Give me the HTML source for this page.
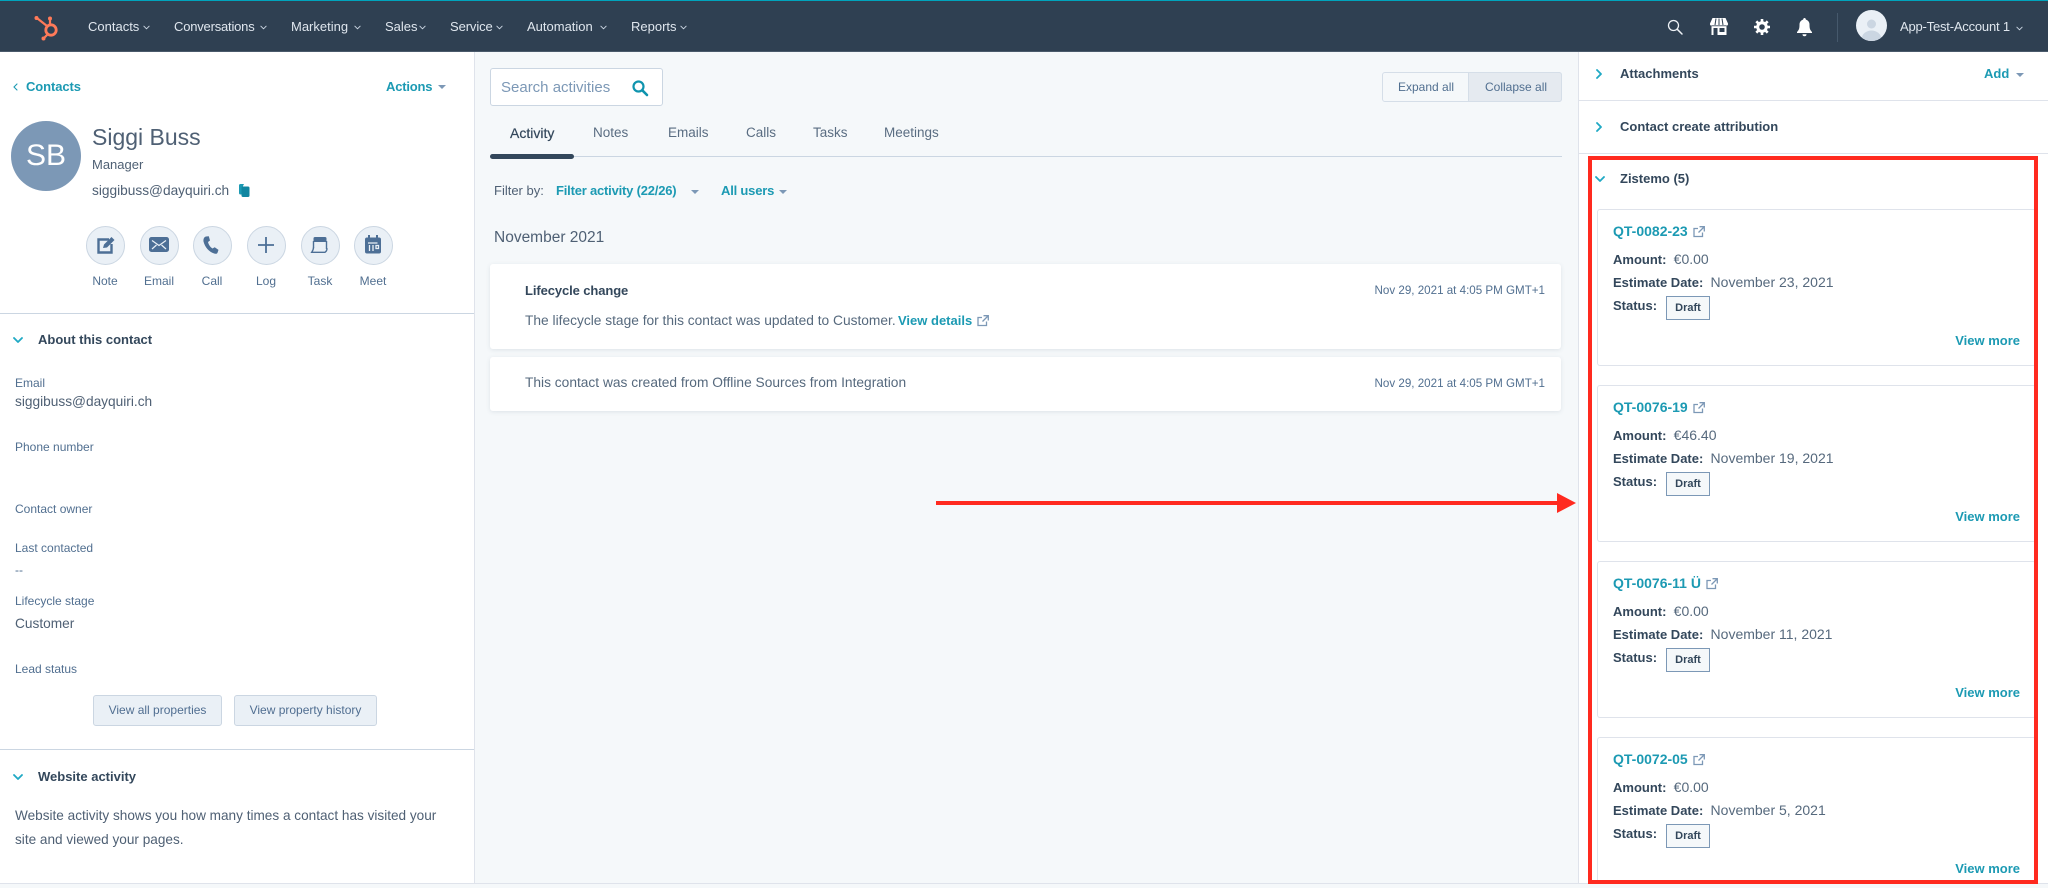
<!DOCTYPE html>
<html lang="en">
<head>
<meta charset="utf-8">
<title>Siggi Buss - Contact</title>
<style>
*{box-sizing:border-box}
html,body{margin:0;padding:0;width:2048px;height:888px;overflow:hidden;background:#f5f8fa}
body{font-family:"Liberation Sans",sans-serif;color:#33475b;font-size:13px}
#p{position:absolute;left:0;top:0;width:2048px;height:888px;overflow:hidden;filter:blur(.35px);background:#f5f8fa}
.a{position:absolute;white-space:nowrap;line-height:20px}
.b{font-weight:bold}
.l{color:#1c9ab3}
.g{color:#516f90}
.box{position:absolute}
svg{position:absolute;overflow:visible}
.nav{color:#dfe6ee;font-size:13px}
.lab{font-size:12px;color:#516f90;left:15px}
.val{font-size:13.7px;left:15px;color:#4f6074}
.circ{position:absolute;top:226px;width:39px;height:39px;border-radius:50%;background:#eaf0f6;border:1px solid #cbd6e2}
.al{top:271px;font-size:12px;color:#516f90;width:60px;text-align:center}
.tab{top:123px;font-size:13.5px;color:#5a6d82}
.btn{position:absolute;top:695px;height:31px;background:#eaf0f6;border:1px solid #cbd6e2;border-radius:3px;color:#506e91;font-size:12px;line-height:29px;text-align:center}
.card{position:absolute;left:490px;width:1071px;background:#fff;border-radius:3px;box-shadow:0 1px 4px rgba(66,91,118,.13)}
.ts{font-size:11.6px;color:#516f90;right:503px}
.q{position:absolute;left:1597px;width:439px;height:157px;background:#fff;border:1px solid #dfe3eb;border-radius:3px}
.q .a{left:15px}
.q .t{top:11px;font-size:14px;font-weight:bold;color:#1c9ab3}
.q .r{font-size:13px;font-weight:bold;color:#33475b}
.q .v{font-size:14px;color:#56697d;font-weight:normal}
.q .d{position:absolute;left:68px;top:86px;width:44px;height:24px;background:#f5f8fa;border:1px solid #7c98b6;font-size:11px;font-weight:bold;line-height:22px;text-align:center;color:#33475b}
.q .m{left:auto;right:15px;top:121px;font-size:13px;font-weight:bold;color:#1c9ab3}
</style>
</head>
<body>
<svg width="0" height="0" style="position:absolute">
<defs>
<symbol id="chev" viewBox="0 0 8 5"><path d="M1 1l3 3 3-3" fill="none" stroke="currentColor" stroke-width="1.1" stroke-linecap="round" stroke-linejoin="round"/></symbol>
<symbol id="cd" viewBox="0 0 10 6"><path d="M1 1l4 4 4-4" fill="none" stroke="#1fa9c4" stroke-width="1.8" stroke-linecap="round" stroke-linejoin="round"/></symbol>
<symbol id="cr" viewBox="0 0 6 10"><path d="M1 1l4 4-4 4" fill="none" stroke="#1fa9c4" stroke-width="1.8" stroke-linecap="round" stroke-linejoin="round"/></symbol>
<symbol id="caret" viewBox="0 0 8 4"><path d="M0 0h8L4 4z" fill="#7c98b6"/></symbol>
<symbol id="ext" viewBox="0 0 12 12"><path d="M9.5 6.500v4h-8.500v-8h4M6.500.7h4.800v4.800M11 1L5.500 6.500" fill="none" stroke="#7c98b6" stroke-width="1.300"/></symbol>
</defs>
</svg>

<div id="p">
<!-- Top bar -->
<div class="box" style="left:0;top:0;width:2048px;height:52px;background:#2f4052;border-top:1px solid #00a4bd;border-bottom:1px solid #4a5a6b"></div>
<svg style="left:33px;top:14px" width="28" height="28" viewBox="0 0 28 28">
<circle cx="18" cy="16" r="5.200" fill="none" stroke="#ff7a59" stroke-width="2.800"/>
<path d="M17 10V5M14 12L4.500 4.500M14.500 20.500L11 24" stroke="#ff7a59" stroke-width="2.200" fill="none" stroke-linecap="round"/>
<circle cx="17" cy="4.500" r="2" fill="#ff7a59"/><circle cx="3.500" cy="4" r="2" fill="#ff7a59"/><circle cx="10.500" cy="24.500" r="2" fill="#ff7a59"/>
</svg>
<div class="a nav" style="left:88px;top:17px">Contacts</div><svg style="left:143px;top:25px;color:#cbd6e2" width="7" height="5"><use href="#chev"/></svg>
<div class="a nav" style="left:174px;top:17px;letter-spacing:-.2px">Conversations</div><svg style="left:260px;top:25px;color:#cbd6e2" width="7" height="5"><use href="#chev"/></svg>
<div class="a nav" style="left:291px;top:17px">Marketing</div><svg style="left:354px;top:25px;color:#cbd6e2" width="7" height="5"><use href="#chev"/></svg>
<div class="a nav" style="left:385px;top:17px">Sales</div><svg style="left:419px;top:25px;color:#cbd6e2" width="7" height="5"><use href="#chev"/></svg>
<div class="a nav" style="left:450px;top:17px;letter-spacing:-.1px">Service</div><svg style="left:496px;top:25px;color:#cbd6e2" width="7" height="5"><use href="#chev"/></svg>
<div class="a nav" style="left:527px;top:17px">Automation</div><svg style="left:600px;top:25px;color:#cbd6e2" width="7" height="5"><use href="#chev"/></svg>
<div class="a nav" style="left:631px;top:17px">Reports</div><svg style="left:680px;top:25px;color:#cbd6e2" width="7" height="5"><use href="#chev"/></svg>

<svg style="left:1667px;top:19px" width="16" height="16" viewBox="0 0 16 16"><circle cx="6.500" cy="6.500" r="5" fill="none" stroke="#eef2f6" stroke-width="1.300"/><path d="M10.300 10.300L15 15" stroke="#eef2f6" stroke-width="1.500" stroke-linecap="round"/></svg>
<svg style="left:1710px;top:18px" width="18" height="17" viewBox="0 0 18 17"><path d="M2.500 0h13L18 5.500a2 2 0 0 1-1.500 2.300V17H1.500V7.800A2 2 0 0 1 0 5.500z" fill="#fff"/><path d="M6 .5L5 7M9 .5V7M12 .5L13 7" stroke="#2f4052" stroke-width="1"/><path d="M1.500 7.800H16.500" stroke="#2f4052" stroke-width=".8"/><rect x="3.500" y="10" width="4" height="7" fill="#2f4052"/><rect x="9.500" y="10" width="5" height="4" fill="#2f4052"/></svg>
<svg style="left:1754px;top:19px" width="16" height="16" viewBox="0 0 16 16"><circle cx="8" cy="8" r="4.300" fill="none" stroke="#fff" stroke-width="3"/><path d="M8 0v3M8 13v3M0 8h3M13 8h3M2.300 2.300l2.100 2.100M11.600 11.600l2.100 2.100M13.700 2.300l-2.100 2.100M4.400 11.600l-2.100 2.100" stroke="#fff" stroke-width="2.600"/></svg>
<svg style="left:1797px;top:18px" width="15" height="18" viewBox="0 0 15 18"><path d="M7.500 0a1.300 1.300 0 0 1 1.300 1.500A5 5 0 0 1 12.500 6.500c0 4 .5 5.500 2.500 7.500v1H0v-1c2-2 2.500-3.500 2.500-7.500a5 5 0 0 1 3.700-5A1.300 1.300 0 0 1 7.500 0z" fill="#fff"/><path d="M5.500 16.200h4a2 2 0 0 1-4 0z" fill="#fff"/></svg>
<div class="box" style="left:1837px;top:13px;width:1px;height:29px;background:#46596c"></div>
<svg style="left:1856px;top:10px" width="31" height="31" viewBox="0 0 31 31"><defs><clipPath id="av"><circle cx="15.500" cy="15.500" r="15.500"/></clipPath></defs><circle cx="15.500" cy="15.500" r="15.500" fill="#eaf0f6"/><g clip-path="url(#av)"><circle cx="15.500" cy="14" r="4.500" fill="#cbd6e2"/><ellipse cx="15.500" cy="28" rx="9.500" ry="7.500" fill="#cbd6e2"/></g></svg>
<div class="a nav" style="left:1900px;top:17px;letter-spacing:-.2px">App-Test-Account 1</div><svg style="left:2016px;top:26px;color:#cbd6e2" width="7" height="5"><use href="#chev"/></svg>

<!-- Left panel -->
<div class="box" style="left:0;top:52px;width:475px;height:832px;background:#fff;border-right:1px solid #dfe3eb"></div>
<svg style="left:13px;top:83px" width="5" height="8" viewBox="0 0 5 8"><path d="M4 1L1 4l3 3" fill="none" stroke="#1c9ab3" stroke-width="1.100" stroke-linecap="round"/></svg>
<div class="a b l" style="left:26px;top:77px;letter-spacing:-.1px">Contacts</div>
<div class="a b l" style="left:386px;top:77px;letter-spacing:-.2px">Actions</div>
<svg style="left:438px;top:85px" width="8" height="4"><use href="#caret"/></svg>
<div class="box" style="left:11px;top:121px;width:70px;height:70px;border-radius:50%;background:#7c98b6;color:#fff;font-size:30px;line-height:70px;text-align:center">SB</div>
<div class="a" style="left:92px;top:126px;font-size:23px;color:#4f6074;line-height:22px">Siggi Buss</div>
<div class="a" style="left:92px;top:155px;font-size:13px;color:#4f6074">Manager</div>
<div class="a" style="left:92px;top:181px;font-size:13.700px;color:#4f6074">siggibuss@dayquiri.ch</div>
<svg style="left:239px;top:184px" width="11" height="13" viewBox="0 0 11 13"><path d="M0 1.500A1.500 1.500 0 0 1 1.500 0H5L4 2v8.500H1.500A1.500 1.500 0 0 1 0 9z" fill="#1c9ab3"/><rect x="2.500" y="2.500" width="8" height="10.500" rx="1.500" fill="#1186a1"/></svg>

<div class="circ" style="left:86px"></div>
<svg style="left:96px;top:235px" width="20" height="20" viewBox="0 0 20 20"><path d="M13 4.500H2.500v13H15.500V9" fill="none" stroke="#4d6f96" stroke-width="2.400"/><path d="M7 13l1-3.500L15.500 2l3 3L11 12.500z" fill="#4d6f96"/></svg>
<div class="circ" style="left:140px"></div>
<svg style="left:149px;top:237px" width="20" height="15" viewBox="0 0 20 15"><rect width="20" height="15" rx="2.500" fill="#4d6f96"/><path d="M3 3.500l7 5 7-5M3 12l4.500-4M17 12l-4.500-4" fill="none" stroke="#eaf0f6" stroke-width="1.200"/></svg>
<div class="circ" style="left:193px"></div>
<svg style="left:203px;top:236px" width="17" height="18" viewBox="0 0 17 18"><path d="M3 .5L5.800 .2l1.200 4.300-2 1.500c.5 2.500 2.200 5 4.500 6.500l2.200-1.200 3.800 2.600-1 2.800c-.4 1-1.500 1.300-2.500 1C6 16.300 1.800 11 .5 5.500.200 3 1 1 3 .5z" fill="#4d6f96"/></svg>
<div class="circ" style="left:247px"></div>
<svg style="left:258px;top:237px" width="16" height="16" viewBox="0 0 16 16"><path d="M8 0v16M0 8h16" stroke="#4d6f96" stroke-width="1.800"/></svg>
<div class="circ" style="left:301px"></div>
<svg style="left:311px;top:237px" width="18" height="16" viewBox="0 0 18 16"><path d="M2.500 1.500a1.500 1.500 0 0 1 1.500-1.500h10a1.500 1.500 0 0 1 1.500 1.500V5h-13z" fill="#4d6f96"/><path d="M2.500 4v7M15.500 4v8" stroke="#4d6f96" stroke-width="1.400" fill="none"/><path d="M2.500 10.500c0 2-.7 3-1.800 4.800H14c1.300-.8 2-2 2-4" fill="none" stroke="#4d6f96" stroke-width="1.400"/></svg>
<div class="circ" style="left:354px"></div>
<svg style="left:365px;top:235px" width="16" height="19" viewBox="0 0 16 19"><rect y="2.500" width="16" height="16" rx="2" fill="#4d6f96"/><path d="M4 0v3M12 0v3" stroke="#4d6f96" stroke-width="2"/><path d="M3 8h9.500M4.500 10v6M8 10v6M11 10.500h2.500v3H11z" stroke="#eaf0f6" stroke-width="1.300" fill="none"/></svg>
<div class="a al" style="left:75px">Note</div>
<div class="a al" style="left:129px">Email</div>
<div class="a al" style="left:182px">Call</div>
<div class="a al" style="left:236px">Log</div>
<div class="a al" style="left:290px">Task</div>
<div class="a al" style="left:343px">Meet</div>
<div class="box" style="left:0;top:313px;width:474px;height:1px;background:#cbd6e2"></div>

<svg style="left:13px;top:337px" width="10" height="6"><use href="#cd"/></svg>
<div class="a b" style="left:38px;top:330px">About this contact</div>
<div class="a lab" style="top:373px">Email</div>
<div class="a val" style="top:392px">siggibuss@dayquiri.ch</div>
<div class="a lab" style="top:437px">Phone number</div>
<div class="a lab" style="top:499px">Contact owner</div>
<div class="a lab" style="top:538px">Last contacted</div>
<div class="a lab" style="top:560px">--</div>
<div class="a lab" style="top:591px">Lifecycle stage</div>
<div class="a val" style="top:614px">Customer</div>
<div class="a lab" style="top:659px">Lead status</div>
<div class="btn" style="left:93px;width:129px">View all properties</div>
<div class="btn" style="left:234px;width:143px">View property history</div>
<div class="box" style="left:0;top:749px;width:474px;height:1px;background:#cbd6e2"></div>
<svg style="left:13px;top:774px" width="10" height="6"><use href="#cd"/></svg>
<div class="a b" style="left:38px;top:767px">Website activity</div>
<div class="a" style="left:15px;top:806px;font-size:13.600px;color:#4f6074">Website activity shows you how many times a contact has visited your</div>
<div class="a" style="left:15px;top:830px;font-size:13.600px;color:#4f6074">site and viewed your pages.</div>

<!-- Centre -->
<div class="box" style="left:490px;top:68px;width:173px;height:38px;background:#fff;border:1px solid #cbd6e2;border-radius:3px"></div>
<div class="a" style="left:501px;top:78px;font-size:15px;color:#7c98b6">Search activities</div>
<svg style="left:632px;top:80px" width="16" height="16" viewBox="0 0 16 16"><circle cx="6.500" cy="6.500" r="5" fill="none" stroke="#0f94ae" stroke-width="2.200"/><path d="M10.300 10.300L15 15" stroke="#0f94ae" stroke-width="2.600" stroke-linecap="round"/></svg>
<div class="a tab" style="left:510px;color:#33475b;font-size:14px;-webkit-text-stroke:.2px #33475b">Activity</div>
<div class="a tab" style="left:593px">Notes</div>
<div class="a tab" style="left:668px">Emails</div>
<div class="a tab" style="left:746px">Calls</div>
<div class="a tab" style="left:813px">Tasks</div>
<div class="a tab" style="left:884px">Meetings</div>
<div class="box" style="left:490px;top:156px;width:1072px;height:1px;background:#cbd6e2"></div>
<div class="box" style="left:490px;top:154px;width:84px;height:5px;background:#33475b;border-radius:3px"></div>
<div class="a g" style="left:494px;top:181px;color:#4f6074">Filter by:</div>
<div class="a b l" style="left:556px;top:181px;letter-spacing:-.2px">Filter activity (22/26)</div>
<svg style="left:691px;top:190px" width="8" height="4"><use href="#caret"/></svg>
<div class="a b l" style="left:721px;top:181px;letter-spacing:-.2px">All users</div>
<svg style="left:779px;top:190px" width="8" height="4"><use href="#caret"/></svg>
<div class="a" style="left:494px;top:228px;font-size:15.500px;color:#4f6074">November 2021</div>

<div class="box" style="left:1382px;top:72px;width:180px;height:30px;border:1px solid #d5dee8;border-radius:3px;background:#f5f8fa"></div>
<div class="box" style="left:1468px;top:72px;width:94px;height:30px;border:1px solid #d5dee8;border-radius:0 3px 3px 0;background:#e5eaf0"></div>
<div class="a g" style="left:1398px;top:77px;font-size:12px">Expand all</div>
<div class="a g" style="left:1485px;top:77px;font-size:12px">Collapse all</div>

<div class="card" style="top:264px;height:85px"></div>
<div class="a b" style="left:525px;top:281px;letter-spacing:-.1px">Lifecycle change</div>
<div class="a" style="left:525px;top:311px;font-size:13.750px;color:#56697d">The lifecycle stage for this contact was updated to Customer.</div>
<div class="a b l" style="left:898px;top:311px">View details</div>
<svg style="left:977px;top:315px" width="12" height="12"><use href="#ext"/></svg>
<div class="a ts" style="top:281px">Nov 29, 2021 at 4:05 PM GMT+1</div>
<div class="card" style="top:357px;height:54px"></div>
<div class="a" style="left:525px;top:373px;font-size:13.750px;color:#56697d">This contact was created from Offline Sources from Integration</div>
<div class="a ts" style="top:374px">Nov 29, 2021 at 4:05 PM GMT+1</div>

<!-- Right panel -->
<div class="box" style="left:1578px;top:52px;width:470px;height:832px;background:#fff;border-left:1px solid #dfe3eb"></div>
<svg style="left:1596px;top:69px" width="6" height="10"><use href="#cr"/></svg>
<div class="a b" style="left:1620px;top:64px">Attachments</div>
<div class="a b l" style="left:1984px;top:64px">Add</div>
<svg style="left:2016px;top:73px" width="8" height="4"><use href="#caret"/></svg>
<div class="box" style="left:1579px;top:100px;width:469px;height:1px;background:#dfe3eb"></div>
<svg style="left:1596px;top:122px" width="6" height="10"><use href="#cr"/></svg>
<div class="a b" style="left:1620px;top:117px">Contact create attribution</div>
<div class="box" style="left:1579px;top:153px;width:469px;height:1px;background:#dfe3eb"></div>
<svg style="left:1595px;top:176px" width="10" height="6"><use href="#cd"/></svg>
<div class="a b" style="left:1620px;top:169px">Zistemo (5)</div>

<div class="q" style="top:209px"><div class="a t">QT-0082-23</div><svg style="left:95px;top:16px" width="12" height="12"><use href="#ext"/></svg>
<div class="a r" style="top:39px">Amount:&nbsp; <span class="v">€0.00</span></div><div class="a r" style="top:62px">Estimate Date:&nbsp; <span class="v">November 23, 2021</span></div><div class="a r" style="top:86px">Status:</div><div class="d">Draft</div><div class="a m">View more</div></div>

<div class="q" style="top:385px"><div class="a t">QT-0076-19</div><svg style="left:95px;top:16px" width="12" height="12"><use href="#ext"/></svg>
<div class="a r" style="top:39px">Amount:&nbsp; <span class="v">€46.40</span></div><div class="a r" style="top:62px">Estimate Date:&nbsp; <span class="v">November 19, 2021</span></div><div class="a r" style="top:86px">Status:</div><div class="d">Draft</div><div class="a m">View more</div></div>

<div class="q" style="top:561px"><div class="a t">QT-0076-11 Ü</div><svg style="left:108px;top:16px" width="12" height="12"><use href="#ext"/></svg>
<div class="a r" style="top:39px">Amount:&nbsp; <span class="v">€0.00</span></div><div class="a r" style="top:62px">Estimate Date:&nbsp; <span class="v">November 11, 2021</span></div><div class="a r" style="top:86px">Status:</div><div class="d">Draft</div><div class="a m">View more</div></div>

<div class="q" style="top:737px"><div class="a t">QT-0072-05</div><svg style="left:95px;top:16px" width="12" height="12"><use href="#ext"/></svg>
<div class="a r" style="top:39px">Amount:&nbsp; <span class="v">€0.00</span></div><div class="a r" style="top:62px">Estimate Date:&nbsp; <span class="v">November 5, 2021</span></div><div class="a r" style="top:86px">Status:</div><div class="d">Draft</div><div class="a m">View more</div></div>

<!-- Bottom strip -->
<div class="box" style="left:0;top:883px;width:2048px;height:5px;background:#f5f8fa;border-top:1px solid #dfe3eb"></div>

<!-- Annotations -->
<div class="box" style="left:1588px;top:156px;width:450px;height:728px;border:4px solid #ff2a1f"></div>
<svg style="left:936px;top:490px" width="645" height="26" viewBox="0 0 645 26"><path d="M0 13H625" stroke="#ff2a1f" stroke-width="4"/><path d="M621 3L640 13 621 23z" fill="#ff2a1f"/></svg>
</div>
</body>
</html>
